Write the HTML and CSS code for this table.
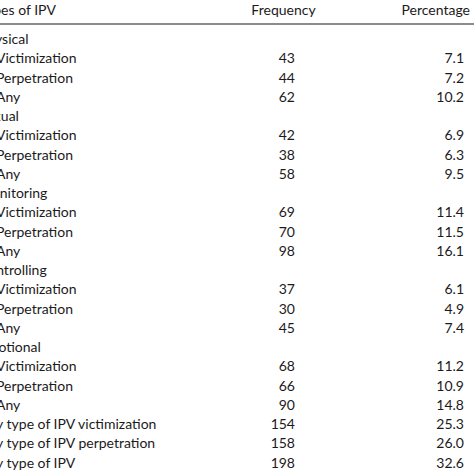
FILE: index.html
```html
<!DOCTYPE html>
<html>
<head>
<meta charset="utf-8">
<link rel="stylesheet" href="styles.css">
</head>
<body>
<table class="ipv">
  <colgroup><col class="c-label"><col class="c-freq"><col class="c-pct"></colgroup>
  <thead>
    <tr><th class="lbl">Types of IPV</th><th class="freq">Frequency</th><th class="pct">Percentage</th></tr>
  </thead>
  <tbody>
    <tr class="first"><td class="lbl">Physical</td><td></td><td></td></tr>
    <tr><td class="lbl sub">Victimization</td><td class="freq">43</td><td class="pct">7.1</td></tr>
    <tr><td class="lbl sub">Perpetration</td><td class="freq">44</td><td class="pct">7.2</td></tr>
    <tr><td class="lbl sub">Any</td><td class="freq">62</td><td class="pct">10.2</td></tr>
    <tr><td class="lbl">Sexual</td><td></td><td></td></tr>
    <tr><td class="lbl sub">Victimization</td><td class="freq">42</td><td class="pct">6.9</td></tr>
    <tr><td class="lbl sub">Perpetration</td><td class="freq">38</td><td class="pct">6.3</td></tr>
    <tr><td class="lbl sub">Any</td><td class="freq">58</td><td class="pct">9.5</td></tr>
    <tr><td class="lbl">Monitoring</td><td></td><td></td></tr>
    <tr><td class="lbl sub">Victimization</td><td class="freq">69</td><td class="pct">11.4</td></tr>
    <tr><td class="lbl sub">Perpetration</td><td class="freq">70</td><td class="pct">11.5</td></tr>
    <tr><td class="lbl sub">Any</td><td class="freq">98</td><td class="pct">16.1</td></tr>
    <tr><td class="lbl">Controlling</td><td></td><td></td></tr>
    <tr><td class="lbl sub">Victimization</td><td class="freq">37</td><td class="pct">6.1</td></tr>
    <tr><td class="lbl sub">Perpetration</td><td class="freq">30</td><td class="pct">4.9</td></tr>
    <tr><td class="lbl sub">Any</td><td class="freq">45</td><td class="pct">7.4</td></tr>
    <tr><td class="lbl">Emotional</td><td></td><td></td></tr>
    <tr><td class="lbl sub">Victimization</td><td class="freq">68</td><td class="pct">11.2</td></tr>
    <tr><td class="lbl sub">Perpetration</td><td class="freq">66</td><td class="pct">10.9</td></tr>
    <tr><td class="lbl sub">Any</td><td class="freq">90</td><td class="pct">14.8</td></tr>
    <tr><td class="lbl">Any type of IPV victimization</td><td class="freq">154</td><td class="pct">25.3</td></tr>
    <tr><td class="lbl">Any type of IPV perpetration</td><td class="freq">158</td><td class="pct">26.0</td></tr>
    <tr><td class="lbl">Any type of IPV</td><td class="freq">198</td><td class="pct">32.6</td></tr>
  </tbody>
</table>
</body>
</html>
```

FILE: styles.css
```css
html, body {
  margin: 0;
  padding: 0;
  background: #ffffff;
  overflow: hidden;
}
.ipv {
  margin-left: -21px;
  width: 495px;
  table-layout: fixed;
  border-collapse: collapse;
  font-family: Lato, "Open Sans", sans-serif;
  font-size: 14px;
  color: #1c1a1b;
}
.c-label { width: 271px; }
.c-freq { width: 67px; }
.c-pct { width: 157px; }
.ipv th, .ipv td {
  padding: 0;
  font-weight: normal;
  white-space: nowrap;
  line-height: 19.25px;
  height: 19.25px;
}
.ipv thead th {
  height: 23px;
  line-height: 20px;
  vertical-align: top;
  border-bottom: 2px solid #8c8c8c;
}
.ipv th.lbl { text-align: left; }
.ipv th.freq { text-align: center; }
.ipv th.pct { text-align: right; padding-right: 4px; }
.ipv tbody tr.first td { padding-top: 4px; }
.lbl { text-align: left; }
.lbl.sub { padding-left: 17px; }
.ipv td.freq { text-align: right; padding-right: 22px; }
.ipv td.pct { text-align: right; padding-right: 10px; }
```
